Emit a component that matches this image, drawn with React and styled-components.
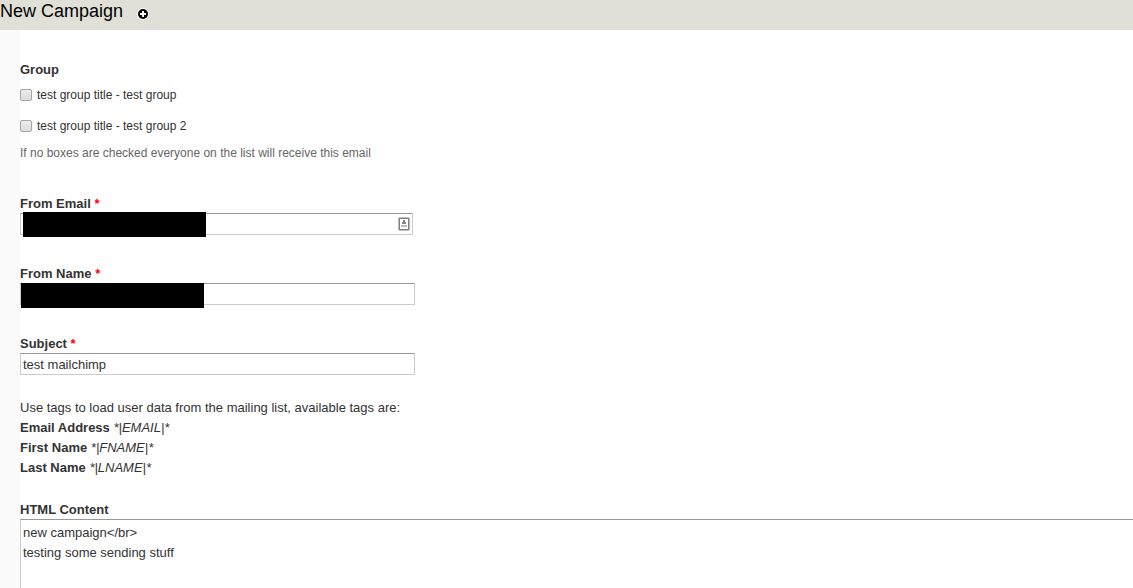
import { useState } from 'react';
import styled, { createGlobalStyle } from 'styled-components';

const GlobalStyle = createGlobalStyle`
  body {
    margin: 0;
    background: #fff;
    color: #333;
    font-family: "Liberation Sans", Arial, sans-serif;
    font-size: 13px;
    line-height: 20px;
  }

  *, *::before, *::after {
    box-sizing: border-box;
  }
`;

const Page = styled.div`
  display: flex;
  flex-direction: column;
  min-height: 100vh;
`;

const Header = styled.header`
  display: flex;
  align-items: flex-start;
  gap: 14px;
  height: 30px;
  background: #e0e0d8;
`;

const Title = styled.h1`
  margin: 0;
  color: #000;
  font-size: 18px;
  font-weight: normal;
  line-height: 22px;
`;

const ShortcutButton = styled.button`
  display: flex;
  margin-top: 8px;
  padding: 0;
  border: none;
  background: none;
  cursor: pointer;
`;

const Form = styled.form`
  display: flex;
  flex: 1;
  flex-direction: column;
  gap: 30px;
  padding-top: 30px;
  border-left: 20px solid #fafafa;
`;

const Group = styled.fieldset`
  margin: 0 0 2px;
  padding: 0;
  border: none;
`;

const GroupTitle = styled.legend`
  padding: 0;
  font-weight: bold;
`;

const Option = styled.label`
  display: flex;
  align-items: center;
  gap: 5px;
  margin: 5px 0 11px;
  font-size: 12px;

  & + & {
    margin-bottom: 7px;
  }
`;

const Checkbox = styled.input`
  appearance: none;
  width: 12px;
  height: 12px;
  margin: 0;
  border: 1px solid #a6a6a6;
  border-radius: 2px;
  background: linear-gradient(#ededed, #dcdcdc);

  &:checked {
    background: #666;
  }
`;

const Description = styled.p`
  margin: 0;
  color: #666;
  font-size: 12px;
`;

const Field = styled.div`
  display: flex;
  flex-direction: column;
  align-items: flex-start;
`;

const Label = styled.label`
  font-weight: bold;
  line-height: 18px;
`;

const Required = styled.span`
  color: #f00;
`;

const InputWrap = styled.div`
  position: relative;
  width: ${({ $width }) => $width};
  max-width: 100%;
`;

const Input = styled.input`
  display: block;
  width: 100%;
  height: 22px;
  padding: 2px;
  border: 1px solid #ccc;
  border-top-color: #999;
  background: #fff;
  color: #333;
  font: inherit;
`;

const Redaction = styled.span`
  position: absolute;
  top: ${({ $top }) => $top};
  left: ${({ $left }) => $left};
  width: 183px;
  height: 25px;
  background: #000;
`;

const AutofillIcon = styled.svg`
  position: absolute;
  top: 4px;
  right: 3px;
`;

const Tags = styled.div`
  margin: -7px 0;
`;

const TagLine = styled.p`
  margin: 0;
`;

const ContentField = styled(Field)`
  flex: 1;
  align-items: stretch;
`;

const TextArea = styled.textarea`
  flex: 1;
  min-height: 60px;
  padding: 3px 2px;
  border: solid #ccc;
  border-width: 1px 0 0 1px;
  border-top-color: #999;
  outline: none;
  background: #fff;
  color: #333;
  font: inherit;
  resize: none;
`;

const groups = ['test group title - test group', 'test group title - test group 2'];

const tags = [
  { name: 'Email Address', tag: '*|EMAIL|*' },
  { name: 'First Name', tag: '*|FNAME|*' },
  { name: 'Last Name', tag: '*|LNAME|*' },
];

const RequiredLabel = ({ htmlFor, children }) => (
  <Label htmlFor={htmlFor}>
    {children} <Required>*</Required>
  </Label>
);

const App = () => {
  const [subject, setSubject] = useState('test mailchimp');
  const [content, setContent] = useState('new campaign</br>\ntesting some sending stuff');

  return (
    <Page>
      <GlobalStyle />
      <Header>
        <Title>New Campaign</Title>
        <ShortcutButton type="button">
          <svg width="12" height="12" viewBox="0 0 12 12" aria-hidden="true">
            <circle cx="6" cy="6" r="6" fill="#fff" />
            <circle cx="6" cy="6" r="5" fill="#000" />
            <path d="M5 3h2v2h2v2H7v2H5V7H3V5h2z" fill="#fff" />
          </svg>
        </ShortcutButton>
      </Header>

      <Form onSubmit={(e) => e.preventDefault()}>
        <Group>
          <GroupTitle>Group</GroupTitle>
          {groups.map((group) => (
            <Option key={group}>
              <Checkbox type="checkbox" />
              {group}
            </Option>
          ))}
          <Description>If no boxes are checked everyone on the list will receive this email</Description>
        </Group>

        <Field>
          <RequiredLabel htmlFor="from-email">From Email</RequiredLabel>
          <InputWrap $width="393px">
            <Input id="from-email" type="email" />
            <Redaction $top="-1px" $left="3px" />
            <AutofillIcon width="12" height="14" viewBox="0 0 12 14" aria-hidden="true">
              <rect x="0.5" y="0.5" width="11" height="13" rx="1" fill="#fff" stroke="#bbb" />
              <rect x="1.5" y="1.5" width="9" height="11" fill="#fff" stroke="#808080" />
              <path d="M5 3h2v2H5zM4 5h4v2H4z" fill="#888" />
              <path d="M3 8h6v2H3z" fill="#bbb" />
            </AutofillIcon>
          </InputWrap>
        </Field>

        <Field>
          <RequiredLabel htmlFor="from-name">From Name</RequiredLabel>
          <InputWrap $width="395px">
            <Input id="from-name" type="text" />
            <Redaction $top="0" $left="1px" />
          </InputWrap>
        </Field>

        <Field>
          <RequiredLabel htmlFor="subject">Subject</RequiredLabel>
          <InputWrap $width="395px">
            <Input id="subject" type="text" value={subject} onChange={(e) => setSubject(e.target.value)} />
          </InputWrap>
        </Field>

        <Tags>
          <TagLine>Use tags to load user data from the mailing list, available tags are:</TagLine>
          {tags.map(({ name, tag }) => (
            <TagLine key={tag}>
              <strong>{name}</strong> <em>{tag}</em>
            </TagLine>
          ))}
        </Tags>

        <ContentField>
          <Label htmlFor="html-content">HTML Content</Label>
          <TextArea id="html-content" value={content} onChange={(e) => setContent(e.target.value)} />
        </ContentField>
      </Form>
    </Page>
  );
};

export default App;
